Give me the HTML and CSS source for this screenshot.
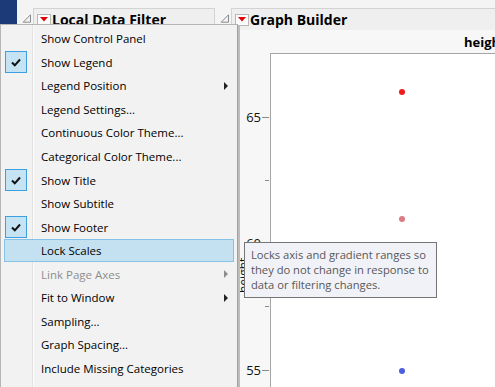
FILE: index.html
```html
<!DOCTYPE html>
<html>
<head>
<meta charset="utf-8">
<link rel="stylesheet" href="styles.css">
</head>
<body>
<div class="app">
  <div class="strip"></div>
  <div class="panel filter">
    <div class="phead">
      <span class="disc"><svg width="10" height="9" viewBox="0 0 10 9"><path d="M8.5 0.8 L8.5 8.2 L1.2 8.2 Z" fill="#f2f2f2" stroke="#8a8a8a" stroke-width="1"/></svg></span>
      <div class="hbox">
        <span class="redbtn"><svg width="8" height="5" viewBox="0 0 8 5"><path d="M0 0 H8 L4 4.5 Z" fill="#e00000"/></svg></span>
        <span class="htitle">Local Data Filter</span>
      </div>
    </div>
  </div>
  <div class="panel graph">
    <div class="phead">
      <span class="disc"><svg width="10" height="9" viewBox="0 0 10 9"><path d="M8.5 0.8 L8.5 8.2 L1.2 8.2 Z" fill="#f2f2f2" stroke="#8a8a8a" stroke-width="1"/></svg></span>
      <div class="hbox">
        <span class="redbtn"><svg width="8" height="5" viewBox="0 0 8 5"><path d="M0 0 H8 L4 4.5 Z" fill="#e00000"/></svg></span>
        <span class="htitle">Graph Builder</span>
      </div>
    </div>
    <div class="gbody">
      <div class="gtitle">height vs. weight</div>
      <div class="plotrow">
        <div class="ylabel"><span>height</span></div>
        <div class="yaxis">
          <span class="tl t65">65</span>
          <span class="tl t60">60</span>
          <span class="tl t55">55</span>
          <svg class="ticks" width="8" height="340" viewBox="0 0 8 340"><path d="M0 64.5 H7 M3 127.5 H7 M0 190.5 H7 M3 253.5 H7 M0 317.5 H7" stroke="#8a8a8a" stroke-width="1"/></svg>
        </div>
        <div class="plot">
          <svg width="224" height="340" viewBox="0 0 224 340"><circle cx="131" cy="38" r="3" fill="#ee1c1c"/><circle cx="131" cy="165" r="3" fill="#db7b84"/><circle cx="131" cy="317" r="3" fill="#4a5fdf"/></svg>
        </div>
      </div>
    </div>
  </div>

  <div class="menu">
    <div class="item"><span class="gut"></span><span class="lbl">Show Control Panel</span></div>
    <div class="item"><span class="gut"><span class="chk"><svg width="10" height="9" viewBox="0 0 10 9"><path d="M1 4.5 L3.8 7.3 L9 1.5" fill="none" stroke="#111" stroke-width="2"/></svg></span></span><span class="lbl">Show Legend</span></div>
    <div class="item"><span class="gut"></span><span class="lbl">Legend Position</span><span class="arr"></span></div>
    <div class="item"><span class="gut"></span><span class="lbl">Legend Settings...</span></div>
    <div class="item"><span class="gut"></span><span class="lbl">Continuous Color Theme...</span></div>
    <div class="item"><span class="gut"></span><span class="lbl">Categorical Color Theme...</span></div>
    <div class="item"><span class="gut"><span class="chk"><svg width="10" height="9" viewBox="0 0 10 9"><path d="M1 4.5 L3.8 7.3 L9 1.5" fill="none" stroke="#111" stroke-width="2"/></svg></span></span><span class="lbl">Show Title</span></div>
    <div class="item"><span class="gut"></span><span class="lbl">Show Subtitle</span></div>
    <div class="item"><span class="gut"><span class="chk"><svg width="10" height="9" viewBox="0 0 10 9"><path d="M1 4.5 L3.8 7.3 L9 1.5" fill="none" stroke="#111" stroke-width="2"/></svg></span></span><span class="lbl">Show Footer</span></div>
    <div class="item hot"><span class="gut"></span><span class="lbl">Lock Scales</span></div>
    <div class="item dis"><span class="gut"></span><span class="lbl">Link Page Axes</span><span class="arr"></span></div>
    <div class="item"><span class="gut"></span><span class="lbl">Fit to Window</span><span class="arr"></span></div>
    <div class="item"><span class="gut"></span><span class="lbl">Sampling...</span></div>
    <div class="item"><span class="gut"></span><span class="lbl">Graph Spacing...</span></div>
    <div class="item"><span class="gut"></span><span class="lbl">Include Missing Categories</span></div>
  </div>

  <div class="tip">Locks axis and gradient ranges so<br>they do not change in response to<br>data or filtering changes.</div>
</div>
</body>
</html>
```

FILE: styles.css
```css
html, body {
  margin: 0;
  padding: 0;
}
body {
  width: 495px;
  height: 387px;
  overflow: hidden;
  background: #f4f4f4;
  font-family: "Segoe UI", "Open Sans", "Noto Sans", sans-serif;
}
.app {
  position: relative;
  display: flex;
  width: 495px;
  height: 387px;
  overflow: hidden;
}
.strip {
  width: 17px;
  height: 24px;
  background: #1c3a78;
  flex: none;
}
.panel {
  display: flex;
  flex-direction: column;
}
.filter {
  width: 198px;
  flex: none;
}
.graph {
  flex: 1;
  min-width: 0;
}
.phead {
  display: flex;
  align-items: flex-start;
  padding-top: 8px;
  height: 22px;
  box-sizing: content-box;
}
.disc {
  width: 10px;
  height: 9px;
  margin: 6px 1px 0 5px;
  display: flex;
  flex: none;
}
.hbox {
  flex: 1;
  display: flex;
  align-items: center;
  height: 21px;
  border: 1px solid #d3d3d3;
  border-right: none;
  background: #efefef;
  padding-left: 3px;
  gap: 1px;
  overflow: hidden;
  white-space: nowrap;
}
.filter .hbox {
  border-right: 1px solid #d3d3d3;
}
.redbtn {
  width: 12px;
  height: 10px;
  border: 1px solid #b8b8b8;
  background: #fbfbfb;
  display: flex;
  align-items: center;
  justify-content: center;
  flex: none;
}
.htitle {
  font-weight: 700;
  font-size: 14px;
  color: #000;
}
.gbody {
  flex: 1;
  background: #f7f7f7;
  display: flex;
  flex-direction: column;
}
.gtitle {
  font-weight: 700;
  font-size: 13px;
  padding-left: 249px;
  height: 23px;
  line-height: 24px;
  white-space: nowrap;
}
.plotrow {
  display: flex;
  flex: 1;
}
.ylabel {
  width: 26px;
  position: relative;
}
.ylabel span {
  position: absolute;
  left: 21px;
  top: 240px;
  transform: rotate(-90deg);
  transform-origin: left top;
  font-size: 12px;
  line-height: 16px;
  color: #111;
}
.yaxis {
  width: 30px;
  position: relative;
}
.ticks {
  position: absolute;
  right: 0;
  top: 0;
}
.tl {
  position: absolute;
  right: 9px;
  font-size: 13px;
  color: #111;
  line-height: 14px;
}
.t65 { top: 57px; }
.t60 { top: 183px; }
.t55 { top: 310px; }
.plot {
  flex: 1;
  background: #fff;
  border-top: 1px solid #a6a6a6;
  border-left: 1px solid #a6a6a6;
}
.plot svg { display: block; }

.menu {
  position: absolute;
  left: 0;
  top: 24px;
  width: 236px;
  height: 380px;
  background: #f2f2f2;
  border: 1px solid #b5b5b5;
  border-right-color: #a0a0a0;
  box-shadow: 3px 0 0 -1px #bdbdbd;
  padding-top: 2px;
  box-sizing: content-box;
  z-index: 2;
}
.menu::before {
  content: "";
  position: absolute;
  left: 31px;
  top: 0;
  bottom: 0;
  width: 1px;
  background: #e2e2e2;
  border-right: 1px solid #fbfbfb;
}
.item {
  position: relative;
  display: flex;
  align-items: center;
  height: 23.55px;
  font-size: 11.5px;
  color: #000;
}
.gut {
  width: 40px;
  flex: none;
  display: flex;
  align-items: center;
  padding-left: 4px;
  box-sizing: border-box;
}
.chk {
  width: 20px;
  height: 20px;
  border: 1px solid #3d9ee0;
  background: #c6e3f3;
  display: flex;
  align-items: center;
  justify-content: center;
  position: relative;
  z-index: 1;
}
.lbl {
  flex: 1;
  white-space: nowrap;
  position: relative;
  z-index: 1;
}
.arr {
  width: 0;
  height: 0;
  border-top: 4px solid transparent;
  border-bottom: 4px solid transparent;
  border-left: 4px solid #222;
  margin-right: 9px;
}
.dis { color: #8d8d8d; }
.dis .arr { border-left-color: #8d8d8d; }
.hot::before {
  content: "";
  position: absolute;
  left: 3px;
  right: 3px;
  top: 0;
  bottom: 0;
  background: #c4e1f1;
  border: 1px solid #86c1e6;
}
.tip {
  position: absolute;
  left: 244px;
  top: 242px;
  width: 179px;
  padding: 4px 6px 5px 6px;
  background: #f1f2f7;
  border: 1px solid #767676;
  font-size: 11.2px;
  line-height: 15px;
  color: #575757;
  white-space: nowrap;
  z-index: 3;
}
```
